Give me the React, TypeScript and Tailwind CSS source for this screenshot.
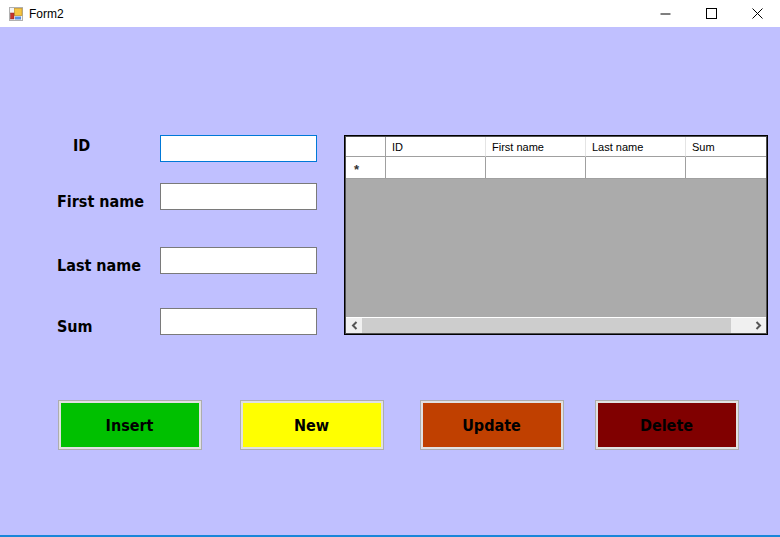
const labelFont = "font-['DejaVu_Sans_Condensed','DejaVu_Sans',sans-serif] font-bold text-black"

function Field({ label, className, labelClass, focused }: { label: string; className: string; labelClass: string; focused?: boolean }) {
  return (
    <div className={`flex h-[27px] ${className}`}>
      <div className={`w-[103px] text-[16px] leading-[18px] whitespace-nowrap ${labelFont} ${labelClass}`}>{label}</div>
      <input
        readOnly
        className={`w-[157px] h-[27px] bg-white border outline-none ${focused ? 'border-[#0078d7]' : 'border-[#7a7a7a]'}`}
      />
    </div>
  )
}

function ActionButton({ label, color, className }: { label: string; color: string; className: string }) {
  return (
    <button className={`w-[144px] h-[50px] border border-[#adadad] bg-[#e1e1e1] p-[2px] ${className}`}>
      <span className={`flex w-full h-full items-center justify-center pt-[1px] pr-[1px] text-[16px] ${labelFont} ${color}`}>{label}</span>
    </button>
  )
}

function HeaderCell({ label, last }: { label: string; last?: boolean }) {
  return (
    <div className={`h-full pl-[6px] pt-[1px] flex items-center text-[11px] text-black font-['Liberation_Sans',sans-serif] border-b border-[#a0a0a0] ${last ? 'flex-1' : 'w-[100px] border-r border-r-[#e4e4e4]'}`}>
      {label}
    </div>
  )
}

export default function App() {
  return (
    <div className="w-[780px] h-[537px] overflow-hidden flex flex-col bg-[#c0c0ff] border-b-2 border-[#1a86d9]">
      {/* title bar */}
      <div className="h-[27px] shrink-0 bg-white flex items-center pl-[9px]">
        <svg width="14" height="14" viewBox="0 0 14 14" className="shrink-0">
          <rect x="0.5" y="0.5" width="13" height="13" fill="#f4f4f4" stroke="#b0b0b0" />
          <rect x="5.5" y="1.5" width="7.5" height="7" fill="#f5c542" stroke="#c99a2e" strokeWidth="0.8" />
          <rect x="1.5" y="6" width="3.5" height="6" fill="#c8322b" stroke="#8a2a22" strokeWidth="0.5" />
          <rect x="6" y="9.5" width="6" height="3" fill="#5b8fe0" />
        </svg>
        <span className="ml-[6px] text-[12px] text-black font-['Liberation_Sans',sans-serif]">Form2</span>
        <div className="ml-auto flex items-center text-black">
          <svg width="11" height="11" viewBox="0 0 11 11" className="mr-[35px]">
            <path d="M0.5 6H10.5" stroke="black" />
          </svg>
          <svg width="11" height="11" viewBox="0 0 11 11" className="mr-[35px]">
            <rect x="0.5" y="0.5" width="10" height="10" fill="none" stroke="black" />
          </svg>
          <svg width="11" height="11" viewBox="0 0 11 11" className="mr-[17px]">
            <path d="M0.5 0.5L10.5 10.5M10.5 0.5L0.5 10.5" stroke="black" />
          </svg>
        </div>
      </div>

      {/* form + grid */}
      <div className="flex pt-[108px] pl-[57px]">
        <div className="w-[287px] shrink-0">
          <Field label="ID" className="" labelClass="pl-[16px] pt-[2px]" focused />
          <Field label="First name" className="mt-[21px]" labelClass="pt-[10px]" />
          <Field label="Last name" className="mt-[37px]" labelClass="pt-[10px]" />
          <Field label="Sum" className="mt-[34px]" labelClass="pt-[10px]" />
        </div>

        <div className="w-[424px] h-[200px] border border-black">
          <div className="h-full border border-[#505050] bg-[#ababab] flex flex-col">
            <div className="h-[20px] flex bg-white shrink-0">
              <div className="w-[40px] border-r border-b border-r-[#a0a0a0] border-b-[#a0a0a0]" />
              <HeaderCell label="ID" />
              <HeaderCell label="First name" />
              <HeaderCell label="Last name" />
              <HeaderCell label="Sum" last />
            </div>
            <div className="h-[22px] flex bg-white shrink-0 border-b border-[#a0a0a0]">
              <div className="w-[40px] flex items-center pl-[8px] pt-[5px] border-r border-[#a0a0a0] text-[13px] text-[#333] font-bold font-['Liberation_Sans',sans-serif]">*</div>
              <div className="w-[100px] border-r border-[#a0a0a0]" />
              <div className="w-[100px] border-r border-[#a0a0a0]" />
              <div className="w-[100px] border-r border-[#a0a0a0]" />
              <div className="flex-1" />
            </div>
            <div className="flex-1" />
            <div className="h-[15px] shrink-0 flex bg-[#f0f0f0] border-t border-white box-content">
              <div className="w-[16px] flex items-center justify-center">
                <svg width="7" height="9" viewBox="0 0 7 9">
                  <path d="M5.5 1L2 4.5L5.5 8" fill="none" stroke="#555" strokeWidth="2" />
                </svg>
              </div>
              <div className="w-[369px] bg-[#cdcdcd]" />
              <div className="flex-1 flex items-center justify-end pr-[4px]">
                <svg width="7" height="9" viewBox="0 0 7 9">
                  <path d="M1.5 1L5 4.5L1.5 8" fill="none" stroke="#555" strokeWidth="2" />
                </svg>
              </div>
            </div>
          </div>
        </div>
      </div>

      {/* action buttons */}
      <div className="flex pl-[58px] mt-[65px]">
        <ActionButton label="Insert" color="bg-[#00c000]" className="" />
        <ActionButton label="New" color="bg-[#ffff00]" className="ml-[38px]" />
        <ActionButton label="Update" color="bg-[#c04000]" className="ml-[36px]" />
        <ActionButton label="Delete" color="bg-[#800000]" className="ml-[31px]" />
      </div>
    </div>
  )
}
